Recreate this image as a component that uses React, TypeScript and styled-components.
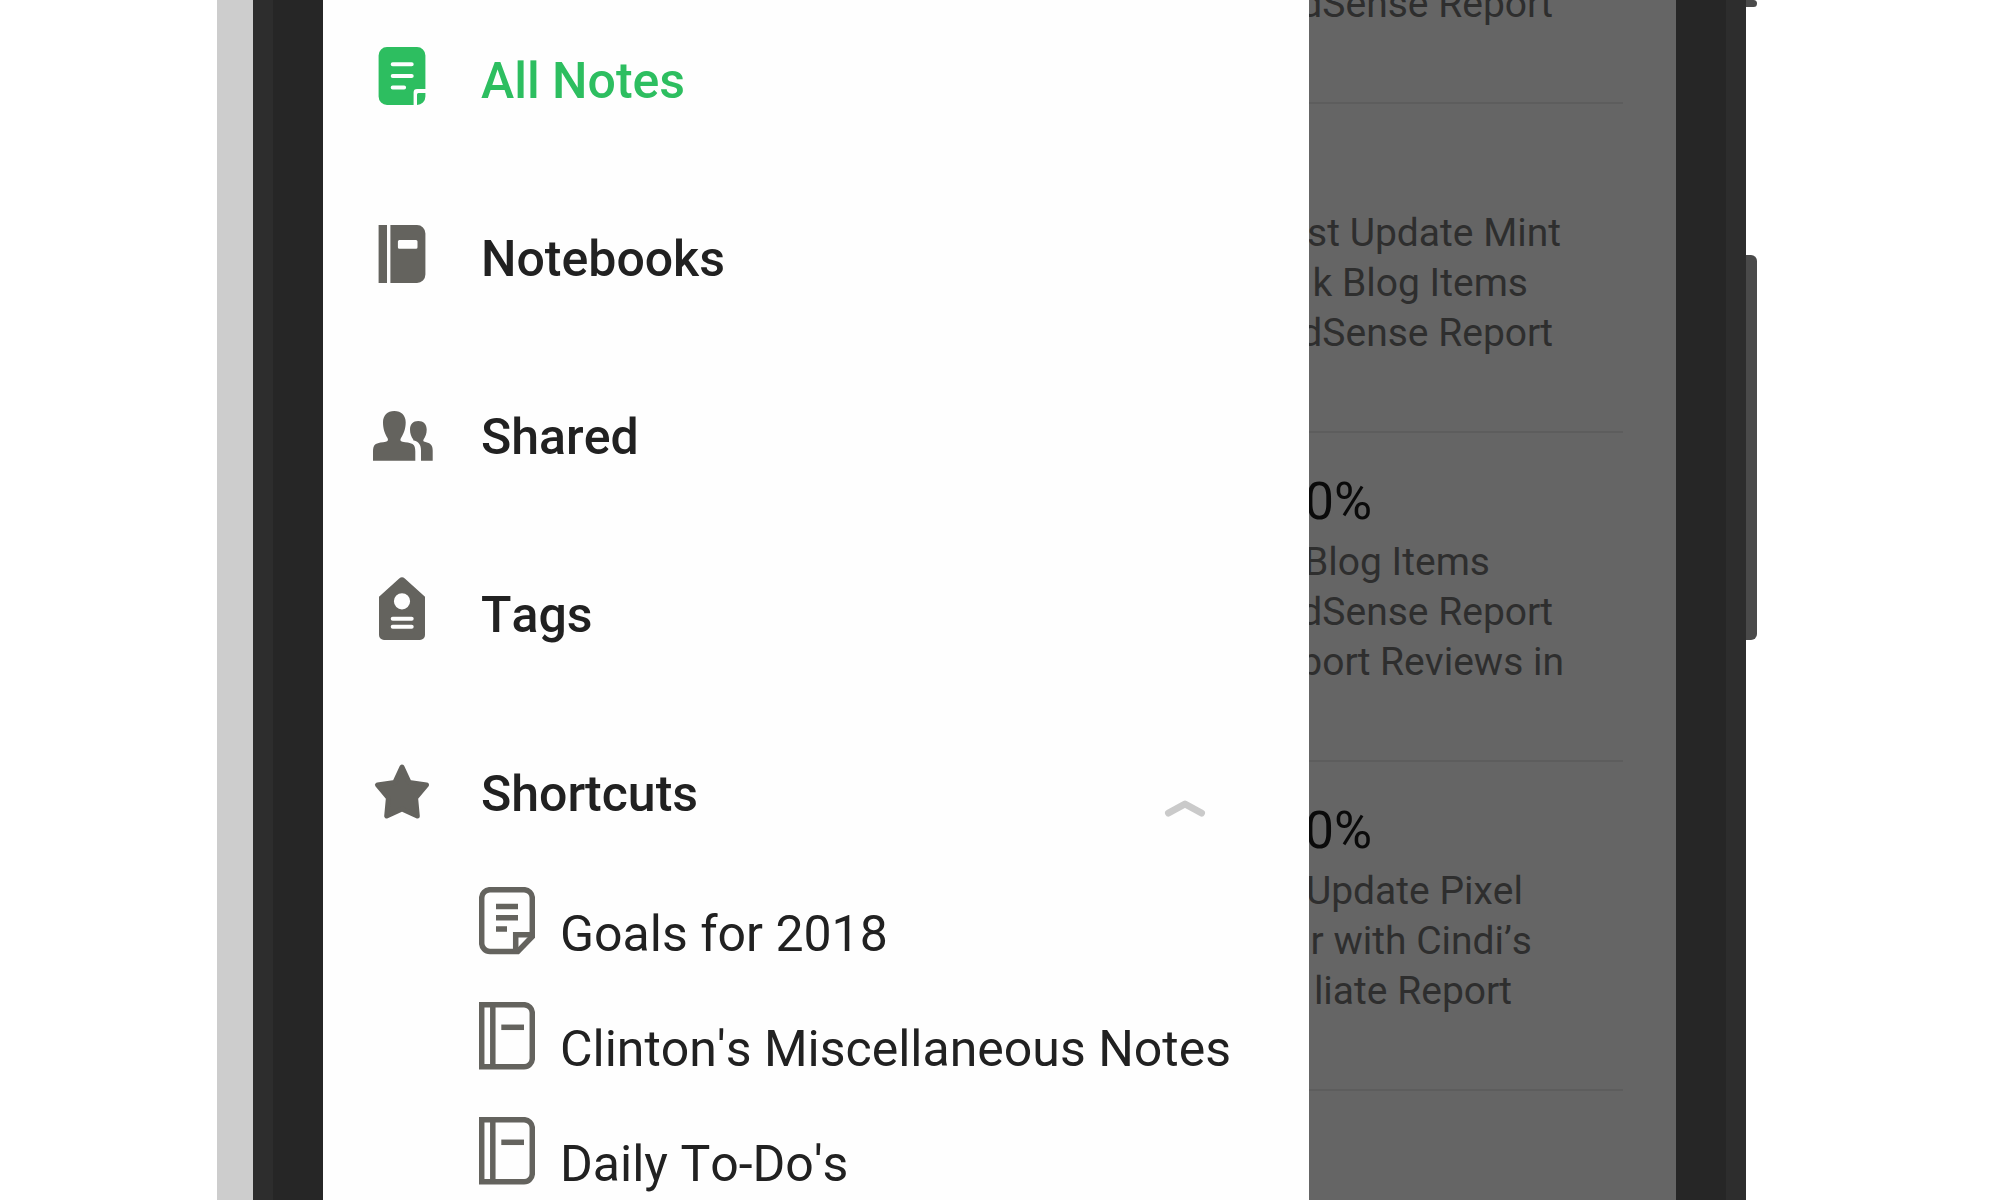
import React, { useState } from 'react';
import styled, { createGlobalStyle } from 'styled-components';

const color = {
  page: '#ffffff',
  drawer: '#fefefe',
  ink: '#212121',
  green: '#2dbe60',
  icon: '#64635e',
  chevron: '#cacaca',
  screen: '#656565',
  divider: '#5d5d5d',
  noteTitle: '#0a0a0a',
  noteText: '#2e2e2e',
};

const GlobalStyle = createGlobalStyle`
  *, *::before, *::after { box-sizing: border-box; }
  body {
    margin: 0;
    background: ${color.page};
    font-family: Roboto, "Liberation Sans", sans-serif;
    font-kerning: none;
  }
`;

const Stage = styled.div`
  display: grid;
  grid-template-columns: 217fr 1540fr 243fr;
  height: 100vh;
  overflow: hidden;
`;

const Phone = styled.div`
  grid-column: 2;
  display: flex;
  min-width: 0;
`;

const Shadow = styled.div`
  flex: 0 0 36px;
  background: #cdcdcd;
`;

const Bezel = styled.div<{ $side: 'left' | 'right' }>`
  flex: 0 0 70px;
  background: #262626;
  border: 0 solid #2d2d2d;
  border-${(p) => p.$side}-width: 20px;
`;

const Rail = styled.div`
  flex: 0 0 11px;
  display: flex;
  flex-direction: column;
  gap: 248px;
`;

const SideKey = styled.div<{ $height: number }>`
  flex: 0 0 ${(p) => p.$height}px;
  background: #4a4a4a;
  border-radius: 0 6px 6px 0;
`;

const Screen = styled.div`
  flex: 1;
  min-width: 0;
  display: grid;
  grid-template-columns: 986fr 367fr;
`;

const Drawer = styled.nav`
  min-width: 0;
  overflow: hidden;
  background: ${color.drawer};
`;

const List = styled.ul`
  list-style: none;
  margin: 0;
  padding: 0;
`;

const MenuLink = styled.a<{ $active?: boolean }>`
  display: flex;
  align-items: flex-end;
  gap: 43px;
  width: 100%;
  padding: 40px 100px 66px 43px;
  border: 0;
  background: none;
  color: ${(p) => (p.$active ? color.green : color.ink)};
  font: 500 50px/62px Roboto, "Liberation Sans", sans-serif;
  font-kerning: none;
  text-align: left;
  text-decoration: none;
  white-space: nowrap;
  cursor: pointer;
`;

const MenuToggle = styled(MenuLink).attrs({ as: 'button' })`
  padding-top: 41px;
  padding-bottom: 62px;
`;

const MenuLabel = styled.span`
  flex: 1;
`;

const MenuIcon = styled.svg<{ $active?: boolean }>`
  flex: none;
  width: 72px;
  height: 72px;
  fill: ${(p) => (p.$active ? color.green : color.icon)};
`;

const Chevron = styled.svg<{ $open: boolean }>`
  flex: none;
  width: 48px;
  height: 32px;
  fill: none;
  stroke: ${color.chevron};
  stroke-width: 7;
  stroke-linecap: round;
  stroke-linejoin: round;
  transform: ${(p) => (p.$open ? 'none' : 'rotate(180deg)')};
`;

const ShortcutLink = styled.a`
  display: flex;
  align-items: flex-start;
  gap: 25px;
  padding: 0 0 37px 156px;
  color: ${color.ink};
  font-size: 50px;
  line-height: 62px;
  text-decoration: none;
  white-space: nowrap;
`;

const ShortcutLabel = styled.span`
  padding-top: 16px;
`;

const ShortcutIcon = styled.svg`
  flex: none;
  width: 56px;
  height: 68px;
  fill: none;
  stroke: ${color.icon};
  stroke-width: 5.5;
`;

const Notes = styled.main`
  min-width: 0;
  overflow: hidden;
  padding-right: 53px;
  background: ${color.screen};
`;

const Note = styled.article<{ $scrolled?: boolean }>`
  margin-top: ${(p) => (p.$scrolled ? '-21px' : '0')};
  padding: ${(p) => (p.$scrolled ? '0' : '38px')} 0 73px;
  border-bottom: 2px solid ${color.divider};
  white-space: nowrap;
`;

const NoteTitle = styled.h2<{ $trail: number }>`
  display: flex;
  justify-content: flex-end;
  height: 62px;
  margin: 0 0 4px;
  padding-right: ${(p) => p.$trail}px;
  color: ${color.noteTitle};
  font-size: 52px;
  font-weight: 400;
  line-height: 62px;
`;

const NoteLine = styled.p<{ $trail: number }>`
  display: flex;
  justify-content: flex-end;
  margin: 0;
  padding-right: ${(p) => p.$trail}px;
  color: ${color.noteText};
  font-size: 39px;
  line-height: 50px;
`;

type Line = { text: string; trail: number };

const scrolledLine: Line = { text: 'dSense Report', trail: 70 };

const notes: { title: Line; lines: Line[] }[] = [
  {
    title: { text: '', trail: 0 },
    lines: [
      { text: 'st Update Mint', trail: 62 },
      { text: 'k Blog Items', trail: 95 },
      { text: 'dSense Report', trail: 70 },
    ],
  },
  {
    title: { text: '0%', trail: 251 },
    lines: [
      { text: 'Blog Items', trail: 133 },
      { text: 'dSense Report', trail: 70 },
      { text: 'port Reviews in', trail: 59 },
    ],
  },
  {
    title: { text: '0%', trail: 251 },
    lines: [
      { text: 'Update Pixel', trail: 100 },
      { text: 'r with Cindi’s', trail: 91 },
      { text: 'liate Report', trail: 111 },
    ],
  },
];

const AllNotesGlyph = () => (
  <MenuIcon viewBox="0 0 72 72" $active aria-hidden="true">
    <path
      fillRule="evenodd"
      d="M21 7h30a8.4 8.4 0 0 1 8.4 8.4V49H51a3.4 3.4 0 0 0-3.4 3.4V65H21a8.4 8.4 0 0 1-8.4-8.4V15.4A8.4 8.4 0 0 1 21 7z
         M26.7 22.3a2 2 0 0 0 0 4h19a2 2 0 0 0 0-4z
         M26.7 34a2 2 0 0 0 0 4h19a2 2 0 0 0 0-4z
         M26.7 45.4a2 2 0 0 0 0 4h11.4a2 2 0 0 0 0-4z"
    />
    <path d="M51 54.5a1.5 1.5 0 0 1 1.5-1.5h6.9v3.6A8.4 8.4 0 0 1 51 65z" />
  </MenuIcon>
);

const NotebooksGlyph = () => (
  <MenuIcon viewBox="0 0 72 72" aria-hidden="true">
    <path d="M12.6 7H21v58h-8.4z" />
    <path
      fillRule="evenodd"
      d="M24.4 7H51a8.4 8.4 0 0 1 8.4 8.4v41.2A8.4 8.4 0 0 1 51 65H24.4z
         M33.4 22a1.5 1.5 0 0 0-1.5 1.5v5.7a1.5 1.5 0 0 0 1.5 1.5H50a1.5 1.5 0 0 0 1.5-1.5v-5.7A1.5 1.5 0 0 0 50 22z"
    />
  </MenuIcon>
);

const SharedGlyph = () => (
  <MenuIcon viewBox="0 0 72 72" aria-hidden="true">
    <path d="M28.3 15c7 0 11.4 4.5 11.4 11.3 0 7-2.2 11.7-4.7 15.7-1.2 2-.6 3.2 1.5 3.7 3.5.7 7.5.8 10 2.4 2.3 1.5 2.8 4.3 2.8 7.4v9.2H7v-9.2c0-3.1.5-5.9 2.8-7.4 2.5-1.6 6.5-1.7 10-2.4 2.1-.5 2.7-1.7 1.7-3.7-2.5-4-4.5-8.7-4.5-15.7C17 19.5 21.3 15 28.3 15z" />
    <path d="M52.3 25c5.2 0 8.4 3.4 8.4 8.5 0 4.3-1.3 7-3 9.7-.8 1.4-.5 2.1 1 2.5 2 .5 4.3 1.1 5.8 2.5 1.7 1.5 2.2 3.7 2.2 6.3v10.2H55V54.5c0-5.2-2.2-8.7-7-9.9-.6-.2-.9-.5-.7-1.1-2-2.7-3.3-5.700-3.300-10 0-5.1 3.1-8.5 8.3-8.5z" />
  </MenuIcon>
);

const TagsGlyph = () => (
  <MenuIcon viewBox="0 0 72 72" aria-hidden="true">
    <path
      fillRule="evenodd"
      d="M33.2 4.4a4.2 4.2 0 0 1 5.6 0L59 22.7V61a5 5 0 0 1-5 5H18a5 5 0 0 1-5-5V22.7z
         M36 19.2a8 8 0 1 0 0 16.2a8 8 0 1 0 0-16.2z
         M26.7 42.7a2 2 0 0 0 0 4h19a2 2 0 0 0 0-4z
         M26.7 50.7a2 2 0 0 0 0 4h19a2 2 0 0 0 0-4z"
    />
  </MenuIcon>
);

const StarGlyph = () => (
  <MenuIcon viewBox="0 0 72 72" aria-hidden="true">
    <path
      d="M36 14 43.2 29.5 60.500 32 49.600 45 51.300 63 36 56 20.700 63 22.400 45 11.500 32 28.800 29.500z"
      stroke={color.icon}
      strokeWidth="5"
      strokeLinejoin="round"
    />
  </MenuIcon>
);

const NoteOutline = () => (
  <ShortcutIcon viewBox="0 0 56 68" aria-hidden="true">
    <path d="M11 2.7h34a8.3 8.3 0 0 1 8.3 8.3v38.5L38.8 64.5H11a8.3 8.3 0 0 1-8.3-8.3V11A8.3 8.3 0 0 1 11 2.7z" />
    <path d="M53.3 47.7H36.7v16.8" />
    <path d="M17 19.4h22M17 30.7h22M17 42h11" />
  </ShortcutIcon>
);

const NotebookOutline = () => (
  <ShortcutIcon viewBox="0 0 56 68" aria-hidden="true">
    <path d="M2.7 2.7h42.3a8.3 8.3 0 0 1 8.3 8.3v45.5a8.3 8.3 0 0 1-8.3 8.3H2.7z" />
    <path d="M13.8 2.7v62" />
    <path d="M22.3 25.3h22.7" />
  </ShortcutIcon>
);

const menu = [
  { label: 'All Notes', Glyph: AllNotesGlyph, active: true },
  { label: 'Notebooks', Glyph: NotebooksGlyph },
  { label: 'Shared', Glyph: SharedGlyph },
  { label: 'Tags', Glyph: TagsGlyph },
];

const shortcuts = [
  { label: 'Goals for 2018', Glyph: NoteOutline },
  { label: "Clinton's Miscellaneous Notes", Glyph: NotebookOutline },
  { label: "Daily To-Do's", Glyph: NotebookOutline },
];

export default function App() {
  const [open, setOpen] = useState(true);

  return (
    <>
      <GlobalStyle />
      <Stage>
        <Phone>
          <Shadow />
          <Bezel $side="left" />
          <Screen>
            <Drawer>
              <List>
                {menu.map(({ label, Glyph, active }) => (
                  <li key={label}>
                    <MenuLink href="#" $active={active}>
                      <Glyph />
                      <MenuLabel>{label}</MenuLabel>
                    </MenuLink>
                  </li>
                ))}
                <li>
                  <MenuToggle aria-expanded={open} onClick={() => setOpen(!open)}>
                    <StarGlyph />
                    <MenuLabel>Shortcuts</MenuLabel>
                    <Chevron $open={open} viewBox="0 0 48 32" aria-hidden="true">
                      <path d="M7.5 20 24 11 40.5 20" />
                    </Chevron>
                  </MenuToggle>
                  {open && (
                    <List>
                      {shortcuts.map(({ label, Glyph }) => (
                        <li key={label}>
                          <ShortcutLink href="#">
                            <Glyph />
                            <ShortcutLabel>{label}</ShortcutLabel>
                          </ShortcutLink>
                        </li>
                      ))}
                    </List>
                  )}
                </li>
              </List>
            </Drawer>
            <Notes>
              <Note $scrolled>
                <NoteLine $trail={scrolledLine.trail}>{scrolledLine.text}</NoteLine>
              </Note>
              {notes.map(({ title, lines }, i) => (
                <Note key={i}>
                  <NoteTitle $trail={title.trail}>{title.text}</NoteTitle>
                  {lines.map((line) => (
                    <NoteLine key={line.text} $trail={line.trail}>
                      {line.text}
                    </NoteLine>
                  ))}
                </Note>
              ))}
            </Notes>
          </Screen>
          <Bezel $side="right" />
          <Rail>
            <SideKey $height={7} />
            <SideKey $height={385} />
          </Rail>
        </Phone>
      </Stage>
    </>
  );
}
